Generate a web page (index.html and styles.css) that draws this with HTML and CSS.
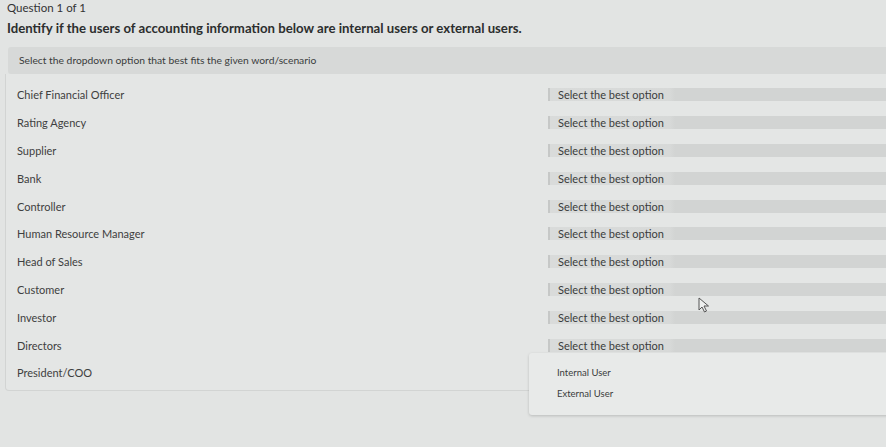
FILE: index.html
```html
<!DOCTYPE html>
<html>
<head>
<meta charset="utf-8">
<link rel="stylesheet" href="styles.css">
</head>
<body>
<div class="page">
  <div class="qnum">Question 1 of 1</div>
  <h1 class="title">Identify if the users of accounting information below are internal users or external users.</h1>
  <div class="instr">Select the dropdown option that best fits the given word/scenario</div>
  <div class="panel">
    <div class="row"><span class="label">Chief Financial Officer</span><div class="cell"><div class="select">Select the best option</div></div></div>
    <div class="row"><span class="label">Rating Agency</span><div class="cell"><div class="select">Select the best option</div></div></div>
    <div class="row"><span class="label">Supplier</span><div class="cell"><div class="select">Select the best option</div></div></div>
    <div class="row"><span class="label">Bank</span><div class="cell"><div class="select">Select the best option</div></div></div>
    <div class="row"><span class="label">Controller</span><div class="cell"><div class="select">Select the best option</div></div></div>
    <div class="row"><span class="label">Human Resource Manager</span><div class="cell"><div class="select">Select the best option</div></div></div>
    <div class="row"><span class="label">Head of Sales</span><div class="cell"><div class="select">Select the best option</div></div></div>
    <div class="row"><span class="label">Customer</span><div class="cell"><div class="select">Select the best option</div></div></div>
    <div class="row"><span class="label">Investor</span><div class="cell"><div class="select">Select the best option</div>
      <svg class="cursor" width="12" height="16" viewBox="0 0 12 16"><path d="M1 1 L1 13 L4 10 L6.5 15 L8.5 14 L6 9 L10.5 9 Z" fill="#eef0ef" stroke="#555" stroke-width="1" stroke-linejoin="round"/></svg>
    </div></div>
    <div class="row"><span class="label">Directors</span><div class="cell"><div class="select">Select the best option</div></div></div>
    <div class="row"><span class="label">President/COO</span><div class="cell"><div class="select covered">Select the best option</div>
      <ul class="menu">
        <li>Internal User</li>
        <li>External User</li>
      </ul>
    </div></div>
  </div>
</div>
</body>
</html>
```
FILE: styles.css
```css
html, body {
  margin: 0;
  padding: 0;
  background: #e2e4e3;
  overflow: hidden;
}
body {
  width: 886px;
  height: 447px;
  font-family: Lato, "Noto Sans", sans-serif;
  color: #3a3c3c;
}
.page {
  width: 900px;
  padding: 1px 0 0 7px;
}
.qnum {
  font-size: 11.5px;
  line-height: 13px;
  color: #333;
}
.title {
  margin: 7px 0 0 0;
  font-size: 13.2px;
  line-height: 15px;
  font-weight: 700;
  color: #2c2e2e;
}
.instr {
  margin: 11px 0 0 1px;
  height: 27px;
  line-height: 27px;
  background: #d7d9d8;
  border-radius: 3px 0 0 3px;
  padding-left: 11px;
  font-size: 10.3px;
  color: #3a3c3c;
}
.panel {
  margin-left: -2px;
  margin-top: 0;
  padding: 7px 0 3px 0;
  width: 900px;
  border: 1px solid #d2d4d3;
  border-top: none;
  border-radius: 0 0 4px 4px;
  background: #e4e6e5;
}
.row {
  display: flex;
  align-items: center;
  height: 27.8px;
  font-size: 11px;
}
.label {
  width: 542px;
  flex: none;
  padding-left: 11px;
  box-sizing: border-box;
  color: #3e4040;
}
.cell {
  position: relative;
  width: 345px;
  flex: none;
}
.select {
  height: 13px;
  line-height: 13px;
  background: linear-gradient(90deg, #d9dbda 0, #d7d9d8 120px, #d2d4d3 125px, #d2d4d3 100%);
  border-left: 2px solid #c6c8c7;
  padding-left: 8px;
  color: #3a3c3c;
  font-size: 11px;
}
.covered {
  visibility: hidden;
}
.menu {
  position: absolute;
  left: -19px;
  top: -13px;
  width: 365px;
  height: 62px;
  margin: 0;
  padding: 13px 0 0 28px;
  box-sizing: border-box;
  list-style: none;
  background: #e8eae9;
  border-radius: 3px;
  box-shadow: 0 1px 3px rgba(0,0,0,0.18);
  font-size: 9.5px;
  color: #3a3c3c;
}
.menu li {
  height: 21px;
  line-height: 14px;
}
.cursor {
  position: absolute;
  left: 150px;
  top: -14px;
}
```
